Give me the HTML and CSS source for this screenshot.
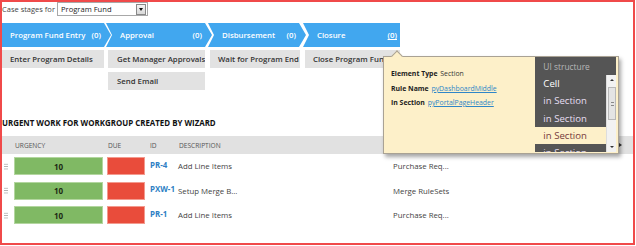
FILE: index.html
```html
<!DOCTYPE html>
<html>
<head>
<meta charset="utf-8">
<link rel="stylesheet" href="styles.css">
</head>
<body>
<div class="frame">
  <div class="toolbar">
    <span class="lbl">Case stages for</span>
    <div class="select"><span class="val">Program Fund</span><span class="dd"><i></i></span></div>
  </div>

  <div class="stages">
    <div class="stage s1">
      <div class="sh"><span class="name">Program Fund Entry</span><span class="cnt">(0)</span></div>
      <div class="step">Enter Program Details</div>
    </div>
    <div class="stage s2">
      <div class="sh"><span class="name">Approval</span><span class="cnt">(0)</span></div>
      <div class="step">Get Manager Approvals</div>
      <div class="step">Send Email</div>
    </div>
    <div class="stage s3">
      <div class="sh"><span class="name">Disbursement</span><span class="cnt">(0)</span></div>
      <div class="step">Wait for Program End</div>
    </div>
    <div class="stage s4">
      <div class="sh last"><span class="name">Closure</span><span class="cnt u">(0)</span></div>
      <div class="step">Close Program Fund</div>
    </div>
  </div>

  <div class="work">
    <h2 class="title">URGENT WORK FOR WORKGROUP CREATED BY WIZARD</h2>
    <div class="thead">
      <span></span>
      <span class="th th-urg">URGENCY</span>
      <span class="th">DUE</span>
      <span class="th th-id">ID</span>
      <span class="th">DESCRIPTION</span>
      <span class="th th-end"><i class="more"></i></span>
    </div>
    <div class="row">
      <span class="grip"></span>
      <span class="urg">10</span>
      <span class="due"></span>
      <span class="id">PR-4</span>
      <span class="desc">Add Line Items</span>
      <span class="desc">Purchase Req...</span>
    </div>
    <div class="row">
      <span class="grip"></span>
      <span class="urg">10</span>
      <span class="due"></span>
      <span class="id">PXW-1</span>
      <span class="desc">Setup Merge B...</span>
      <span class="desc">Merge RuleSets</span>
    </div>
    <div class="row">
      <span class="grip"></span>
      <span class="urg">10</span>
      <span class="due"></span>
      <span class="id">PR-1</span>
      <span class="desc">Add Line Items</span>
      <span class="desc">Purchase Req...</span>
    </div>
  </div>

  <div class="tip">
    <div class="tip-arrow"></div>
    <div class="tip-info">
      <div class="ti"><b>Element Type</b> Section</div>
      <div class="ti"><b>Rule Name</b> <a>pyDashboardMiddle</a></div>
      <div class="ti"><b>In Section</b> <a>pyPortalPageHeader</a></div>
    </div>
    <div class="tree">
      <div class="tree-h">UI structure</div>
      <div class="tree-body">
        <div class="tree-list">
          <div class="it white">Cell</div>
          <div class="it">in Section</div>
          <div class="it">in Section</div>
          <div class="it sel">in Section</div>
          <div class="it">in Section</div>
        </div>
        <div class="sb">
          <span class="sb-up"></span>
          <span class="sb-thumb"><i></i></span>
          <span class="sb-down"></span>
        </div>
      </div>
    </div>
  </div>
</div>
</body>
</html>
```
FILE: styles.css
```css
* { box-sizing: border-box; }
html, body { margin: 0; padding: 0; background: #fff; }
body { font-family: "Open Sans", "DejaVu Sans", sans-serif; color: #333; }

.frame {
  position: relative;
  width: 635px;
  height: 245px;
  border: 2px solid #f04a4a;
  overflow: hidden;
}

/* toolbar */
.toolbar { display: flex; align-items: center; height: 14px; }
.lbl { font-size: 7.5px; color: #444; width: 55px; white-space: nowrap; }
.select {
  display: flex; align-items: center; justify-content: space-between;
  width: 91px; height: 14px; border: 1px solid #a8a8a8; background: #fff;
  padding-left: 3px;
}
.val { font-size: 7.6px; color: #222; }
.dd {
  width: 10px; height: 11px; margin-right: 1px;
  background: linear-gradient(#f4f4f4, #d8d8d8); border: 1px solid #888;
  display: flex; align-items: center; justify-content: center;
}
.dd i { width: 0; height: 0; border-left: 2.5px solid transparent; border-right: 2.5px solid transparent; border-top: 3px solid #111; }

/* stages */
.stages { display: flex; margin-top: 7px; }
.stage { display: flex; flex-direction: column; gap: 4px; }
.s1 { width: 102px; }
.s2 { width: 97px; margin-left: 4px; }
.s3 { width: 90px; margin-left: 5px; }
.s4 { width: 95px; margin-left: 5px; }

.sh {
  height: 24px; margin-bottom: -1px;
  background: #41a7ef; color: #fff;
  display: flex; align-items: center; justify-content: space-between;
  font-size: 7.8px; font-weight: 600;
  margin-left: -2px; margin-right: -7px;
  padding: 0 10px 0 14px;
  white-space: nowrap;
  clip-path: polygon(0 0, calc(100% - 7px) 0, 100% 50%, calc(100% - 7px) 100%, 0 100%, 6px 50%);
}
.s1 .sh { margin-left: 0; padding-left: 8px; clip-path: polygon(0 0, calc(100% - 7px) 0, 100% 50%, calc(100% - 7px) 100%, 0 100%); }
.sh.last { margin-right: 0; padding-right: 3px; clip-path: polygon(0 0, 100% 0, 100% 100%, 0 100%, 6px 50%); }
.s3 .sh { margin-right: -6px; }
.cnt { font-weight: 600; }
.cnt.u { text-decoration: underline; }

.step {
  height: 18px; background: #e2e2e2;
  font-size: 7.8px; font-weight: 600; color: #333;
  display: flex; align-items: center; padding-left: 8px;
  white-space: nowrap; overflow: hidden;
}
.s2 .step { padding-left: 9px; }

/* work list */
.work { margin-top: 27px; }
.title { margin: 0 0 7px 0; font-size: 7.9px; font-weight: 700; color: #111; line-height: 12px; height: 12px; }

.thead, .row {
  display: grid;
  grid-template-columns: 12px 93px 43px 28px 215px 1fr;
  align-items: center;
}
.thead { height: 18px; background: #e1e1e1; }
.th { font-size: 6.6px; color: #555; padding-left: 1px; }
.th-id { padding-left: 0; }
.th-end { display: flex; justify-content: flex-end; padding-right: 11px; }
.more { width: 0; height: 0; border-top: 2px solid transparent; border-bottom: 2px solid transparent; border-left: 3px solid #333; }

.row { height: 24.5px; }
.grip {
  width: 4px; height: 7px; margin-left: 2px;
  background-image: radial-gradient(circle, #aaa 0.8px, transparent 0.9px);
  background-size: 2px 2.4px;
}
.urg {
  width: 89px; height: 18px; background: #80b964; border: 1px solid #b3d69f;
  display: flex; align-items: center; justify-content: center;
  font-size: 8px; font-weight: 700; color: #1d2a14;
}
.due { width: 38px; height: 18px; background: #e94c3b; border: 1px solid #f39a8e; }
.id { font-size: 7.9px; font-weight: 700; color: #2e7fc4; margin-top: -3px; white-space: nowrap; }
.desc { font-size: 7.8px; color: #444; white-space: nowrap; }

/* tooltip */
.tip {
  position: absolute; left: 381px; top: 54px; width: 236px; height: 98px;
  background: #fdf0c9; border: 1px solid #a9a294;
  box-shadow: 2px 3px 4px rgba(0,0,0,0.35);
  display: flex;
}
.tip-arrow {
  position: absolute; left: 9px; top: -5px; width: 8px; height: 8px;
  background: #fdf0c9; border-left: 1px solid #a9a294; border-top: 1px solid #a9a294;
  transform: rotate(45deg);
}
.tip-info { width: 152px; padding: 10px 0 0 7px; display: flex; flex-direction: column; }
.ti { font-size: 6.9px; color: #333; line-height: 14.5px; white-space: nowrap; }
.ti b { font-weight: 700; color: #222; margin-right: 1px; }
.ti a { color: #2f86c8; text-decoration: underline; }

.tree { width: 81px; margin: 0 2px 1px 0; background: #555; display: flex; flex-direction: column; }
.tree-h { height: 18px; font-size: 8.4px; color: #b8b8b8; padding-left: 8px; display: flex; align-items: center; }
.tree-body { flex: 1; display: flex; overflow: hidden; }
.tree-list { flex: 1; overflow: hidden; }
.it { height: 17.3px; font-size: 9.6px; color: #e6def2; padding-left: 8px; display: flex; align-items: center; white-space: nowrap; }
.it.white { color: #fff; }
.it.sel { background: #fdf0c9; color: #76393b; }
.sb { width: 10px; background: #f2f2f2; border-left: 1px solid #ddd; position: relative; }
.sb-up, .sb-down { position: absolute; left: 3px; width: 0; height: 0; border-left: 2px solid transparent; border-right: 2px solid transparent; }
.sb-up { top: 4px; border-bottom: 2px solid #333; }
.sb-down { bottom: 4px; border-top: 2px solid #333; }
.sb-thumb {
  position: absolute; left: 1px; top: 12px; width: 8px; height: 33px;
  background: #e4e4e4; border: 1px solid #b8b8b8;
  display: flex; align-items: center; justify-content: center;
}
.sb-thumb i { width: 3px; height: 4px; border-top: 1px solid #888; border-bottom: 1px solid #888; }
```
